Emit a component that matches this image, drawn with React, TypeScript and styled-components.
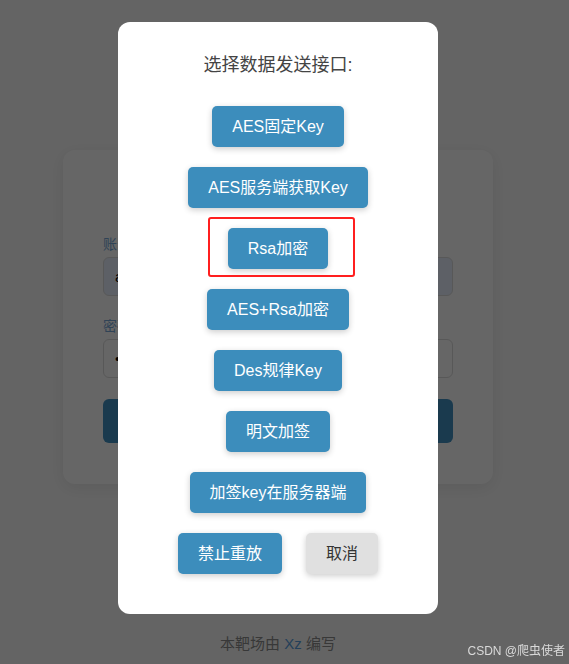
import styled, { createGlobalStyle } from 'styled-components';

const GlobalStyle = createGlobalStyle`
  html, body {
    margin: 0;
    padding: 0;
    height: 100%;
  }
  body {
    font-family: "Liberation Sans", "Noto Sans CJK SC", sans-serif;
    background: #fafafa;
  }
  * {
    box-sizing: border-box;
  }
`;

const Page = styled.div`
  height: 664px;
  padding-right: 13px;
  display: flex;
  flex-direction: column;
  align-items: center;
`;

// login card behind the dialog, its centre part is covered
const LoginCard = styled.div`
  margin-top: 150px;
  width: 430px;
  padding: 86px 40px 41px;
  background: #ffffff;
  border-radius: 12px;
  box-shadow: 0 4px 16px rgba(0, 0, 0, 0.08);
`;

const Field = styled.div`
  & + & {
    margin-top: 22px;
  }
`;

const Label = styled.label`
  display: block;
  margin-bottom: 4px;
  font-size: 14px;
  line-height: 17px;
  color: #78a8d8;
`;

const Input = styled.div<{ $filled?: boolean }>`
  height: 39px;
  padding: 0 11px;
  display: flex;
  align-items: center;
  border: 1px solid #dcdcdc;
  border-radius: 6px;
  background: ${(p) => (p.$filled ? '#e8f0fe' : '#ffffff')};
  font-size: 15px;
  color: #000;
`;

const LoginButton = styled.div`
  margin-top: 21px;
  height: 44px;
  border-radius: 6px;
  background: #4191c3;
`;

const Footer = styled.div`
  margin-top: auto;
  padding-bottom: 10px;
  font-size: 15px;
  line-height: 20px;
  color: #8c8c8c;

  b {
    font-weight: normal;
    color: #5aa0e0;
  }
`;

const Overlay = styled.div`
  position: fixed;
  inset: 0;
  padding-right: 13px;
  background: rgba(0, 0, 0, 0.6);
  display: flex;
  justify-content: center;
  align-items: flex-start;
`;

const Modal = styled.div`
  margin-top: 22px;
  width: 320px;
  padding: 30px 0 40px;
  background: #ffffff;
  border-radius: 12px;
  display: flex;
  flex-direction: column;
  align-items: center;
  gap: 20px;
`;

const ModalTitle = styled.div`
  margin-bottom: 8px;
  font-size: 18px;
  line-height: 26px;
  color: #444;
`;

const ActionButton = styled.button<{ $variant?: 'primary' | 'plain'; $marked?: boolean }>`
  position: relative;
  height: 41px;
  padding: 0 20px;
  border: none;
  border-radius: 5px;
  background: ${(p) => (p.$variant === 'plain' ? '#e0e0e0' : '#3c8dbc')};
  color: ${(p) => (p.$variant === 'plain' ? '#333' : '#fff')};
  font-family: inherit;
  font-size: 16px;
  line-height: 41px;
  white-space: nowrap;
  box-shadow: 0 2px 6px rgba(0, 0, 0, 0.2);
  cursor: pointer;

  ${(p) =>
    p.$marked &&
    `
    &::after {
      content: '';
      position: absolute;
      top: -11px;
      bottom: -8px;
      left: -20px;
      right: -27px;
      border: 2px solid #ff1f1f;
      border-radius: 3px;
      pointer-events: none;
    }
  `}
`;

const ButtonRow = styled.div`
  display: flex;
  gap: 24px;
`;

const Watermark = styled.div`
  position: fixed;
  right: 4px;
  bottom: 5px;
  font-size: 12px;
  line-height: 16px;
  color: #d9d9d9;
`;

const apiOptions = [
  'AES固定Key',
  'AES服务端获取Key',
  'Rsa加密',
  'AES+Rsa加密',
  'Des规律Key',
  '明文加签',
  '加签key在服务器端',
];

function App() {
  return (
    <>
      <GlobalStyle />
      <Page>
        <LoginCard>
          <Field>
            <Label>账号</Label>
            <Input $filled>admin</Input>
          </Field>
          <Field>
            <Label>密码</Label>
            <Input>••••••</Input>
          </Field>
          <LoginButton />
        </LoginCard>
        <Footer>
          本靶场由 <b>Xz</b> 编写
        </Footer>
      </Page>
      <Overlay>
        <Modal>
          <ModalTitle>选择数据发送接口:</ModalTitle>
          {apiOptions.map((name) => (
            <ActionButton key={name} $marked={name === 'Rsa加密'}>
              {name}
            </ActionButton>
          ))}
          <ButtonRow>
            <ActionButton>禁止重放</ActionButton>
            <ActionButton $variant="plain">取消</ActionButton>
          </ButtonRow>
        </Modal>
      </Overlay>
      <Watermark>CSDN @爬虫使者</Watermark>
    </>
  );
}

export default App;
